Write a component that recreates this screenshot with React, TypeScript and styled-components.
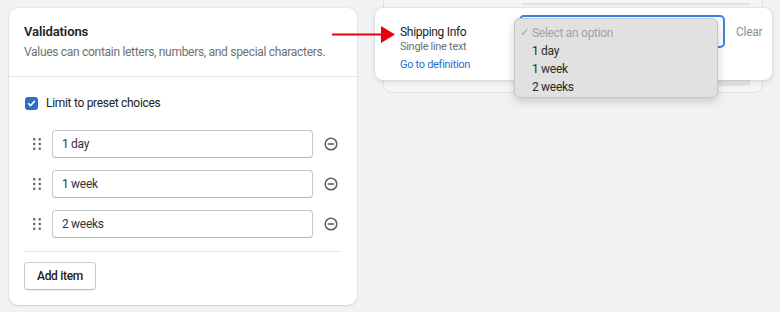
import styled, { createGlobalStyle } from 'styled-components';

const GlobalStyle = createGlobalStyle`
    html, body {
        margin: 0;
        padding: 0;
        background: #f1f2f4;
        font-family: Roboto, 'Liberation Sans', sans-serif;
        letter-spacing: -0.3px;
        color: #202223;
        overflow: hidden;
    }
`;

const Page = styled.div`
    position: relative;
    width: 780px;
    height: 312px;
    display: flex;
    align-items: flex-start;
    padding-left: 9px;
    box-sizing: border-box;
`;

const Card = styled.section`
    width: 348px;
    margin-top: 8px;
    background: #fff;
    border-radius: 9px;
    box-shadow: 0 0 0 1px rgba(0, 0, 0, 0.03), 0 1px 2px rgba(0, 0, 0, 0.12);
    box-sizing: border-box;
`;

const CardHeader = styled.div`
    padding: 14px 15px 16px;
    border-bottom: 1px solid #e1e3e5;
    display: flex;
    flex-direction: column;
    gap: 2px;
`;

const Title = styled.h2`
    margin: 0;
    font-size: 13px;
    line-height: 20px;
    font-weight: 600;
    letter-spacing: -0.1px;
    color: #202223;
`;

const Subtitle = styled.p`
    margin: 0;
    font-size: 12px;
    line-height: 16px;
    color: #6d7175;
    white-space: nowrap;
`;

const CardBody = styled.div`
    padding: 18px 16px 15px 15px;
    display: flex;
    flex-direction: column;
`;

const CheckRow = styled.label`
    display: flex;
    align-items: center;
    gap: 8px;
    height: 16px;
    padding-left: 1px;
    font-size: 12px;
    color: #202223;
`;

const CheckBox = styled.span`
    width: 13px;
    height: 13px;
    border-radius: 3px;
    background: #2c6ecb;
    display: flex;
    align-items: center;
    justify-content: center;
`;

const ItemList = styled.div`
    display: flex;
    flex-direction: column;
    gap: 12px;
    margin-top: 19px;
    padding-bottom: 13px;
    border-bottom: 1px solid #e1e3e5;
`;

const ItemRow = styled.div`
    display: flex;
    align-items: center;
`;

const Handle = styled.span`
    width: 28px;
    flex: none;
    display: flex;
    justify-content: center;
    padding-right: 2px;
    box-sizing: border-box;
`;

const TextField = styled.div`
    width: 261px;
    flex: none;
    height: 28px;
    box-sizing: border-box;
    border: 1px solid #c4c8cc;
    border-bottom-color: #aeb4b9;
    border-radius: 4px;
    padding: 0 9px;
    display: flex;
    align-items: center;
    font-size: 12px;
    color: #303236;
`;

const RemoveButton = styled.span`
    width: 28px;
    flex: none;
    display: flex;
    justify-content: flex-end;
    padding-right: 3px;
    box-sizing: border-box;
`;

const AddButton = styled.button`
    align-self: flex-start;
    margin-top: 10px;
    width: 72px;
    height: 28px;
    background: #fff;
    border: 1px solid #c9cccf;
    border-bottom-color: #babfc3;
    border-radius: 4px;
    box-shadow: 0 1px 0 rgba(0, 0, 0, 0.05);
    font-family: inherit;
    letter-spacing: inherit;
    font-size: 12px;
    font-weight: 500;
    color: #202223;
    padding: 0;
`;

const Preview = styled.div`
    margin-left: 18px;
    width: 397px;
    display: grid;
`;

const BackCard = styled.div`
    grid-area: 1 / 1;
    margin: 0 9px 0 8px;
    height: 93px;
    box-sizing: border-box;
    border: 1px solid #e1e3e5;
    border-top: none;
    border-radius: 0 0 8px 8px;
    background: #f4f5f6;
    display: flex;
    flex-direction: column;
    justify-content: space-between;
    padding: 3px 12px 6px 138px;
`;

const Bar = styled.div<{ $h: number }>`
    height: ${p => p.$h}px;
    background: #e3e4e6;
    border-radius: 1px;
`;

const FrontCard = styled.div`
    grid-area: 1 / 1;
    align-self: start;
    position: relative;
    margin-top: 8px;
    height: 72px;
    background: #fff;
    border-radius: 8px;
    box-shadow: 0 0 0 1px rgba(0, 0, 0, 0.04), 0 2px 6px rgba(0, 0, 0, 0.1);
    display: flex;
    align-items: flex-start;
    padding-left: 25px;
    box-sizing: border-box;
`;

const FieldInfo = styled.div`
    width: 119px;
    flex: none;
    padding-top: 16px;
    display: flex;
    flex-direction: column;
`;

const FieldName = styled.span`
    font-size: 12px;
    line-height: 16px;
    color: #202223;
`;

const FieldType = styled.span`
    font-size: 11px;
    line-height: 14px;
    color: #6d7175;
`;

const DefinitionLink = styled.a`
    font-size: 11px;
    line-height: 14px;
    margin-top: 4px;
    color: #2c6ecb;
    text-decoration: none;
`;

const SelectBox = styled.div`
    margin-top: 7px;
    width: 206px;
    flex: none;
    height: 33px;
    box-sizing: border-box;
    border: 2px solid #3b82e6;
    border-radius: 5px;
`;

const ClearText = styled.span`
    margin: 16px 0 0 11px;
    font-size: 12px;
    line-height: 16px;
    color: #8c9196;
`;

const Menu = styled.div`
    position: absolute;
    left: 139px;
    top: 10px;
    width: 204px;
    height: 80px;
    box-sizing: border-box;
    padding-top: 5px;
    background: #e1e1e1;
    border: 1px solid rgba(0, 0, 0, 0.12);
    border-radius: 6px;
    box-shadow: 0 3px 10px rgba(0, 0, 0, 0.18);
`;

const MenuItem = styled.div<{ $muted?: boolean }>`
    position: relative;
    height: 18px;
    line-height: 18px;
    padding-left: 17px;
    font-size: 12px;
    color: ${p => (p.$muted ? '#a3a3a3' : '#2b2b2b')};
`;

const Tick = styled.span`
    position: absolute;
    left: 5px;
    top: 0;
    font-size: 11px;
    color: #a3a3a3;
`;

const Arrow = styled.svg`
    position: absolute;
    left: 332px;
    top: 25px;
`;

const items = ['1 day', '1 week', '2 weeks'];

const DragDots = () => (
    <svg width="8" height="12" viewBox="0 0 8 12">
        {[1.2, 6.8].map(x => [1.2, 6, 10.8].map(y => (
            <circle key={`${x}-${y}`} cx={x} cy={y} r="1.2" fill="#5c5f62" />
        )))}
    </svg>
);

const MinusCircle = () => (
    <svg width="14" height="14" viewBox="0 0 14 14">
        <circle cx="7" cy="7" r="5.8" fill="none" stroke="#5c5f62" strokeWidth="1.5" />
        <line x1="4.3" y1="7" x2="9.7" y2="7" stroke="#5c5f62" strokeWidth="1.5" strokeLinecap="round" />
    </svg>
);

const App = () => {
    return (
        <>
            <GlobalStyle />
            <Page>
                <Card>
                    <CardHeader>
                        <Title>Validations</Title>
                        <Subtitle>Values can contain letters, numbers, and special characters.</Subtitle>
                    </CardHeader>
                    <CardBody>
                        <CheckRow>
                            <CheckBox>
                                <svg width="9" height="9" viewBox="0 0 9 9">
                                    <path d="M1.6 4.7 L3.6 6.6 L7.4 2.4" fill="none" stroke="#fff" strokeWidth="1.6" strokeLinecap="round" strokeLinejoin="round" />
                                </svg>
                            </CheckBox>
                            Limit to preset choices
                        </CheckRow>
                        <ItemList>
                            {items.map(item => (
                                <ItemRow key={item}>
                                    <Handle><DragDots /></Handle>
                                    <TextField>{item}</TextField>
                                    <RemoveButton><MinusCircle /></RemoveButton>
                                </ItemRow>
                            ))}
                        </ItemList>
                        <AddButton>Add item</AddButton>
                    </CardBody>
                </Card>
                <Preview>
                    <BackCard>
                        <Bar $h={2} />
                        <Bar $h={7} />
                    </BackCard>
                    <FrontCard>
                        <FieldInfo>
                            <FieldName>Shipping Info</FieldName>
                            <FieldType>Single line text</FieldType>
                            <DefinitionLink>Go to definition</DefinitionLink>
                        </FieldInfo>
                        <SelectBox />
                        <ClearText>Clear</ClearText>
                        <Menu>
                            <MenuItem $muted><Tick>✓</Tick>Select an option</MenuItem>
                            {items.map(item => (
                                <MenuItem key={item}>{item}</MenuItem>
                            ))}
                        </Menu>
                    </FrontCard>
                </Preview>
                <Arrow width="64" height="19" viewBox="0 0 64 19">
                    <line x1="0" y1="9.5" x2="52" y2="9.5" stroke="#e8000b" strokeWidth="2.2" />
                    <polygon points="49,1 63,9.5 49,18" fill="#e8000b" />
                </Arrow>
            </Page>
        </>
    );
};

export default App;
